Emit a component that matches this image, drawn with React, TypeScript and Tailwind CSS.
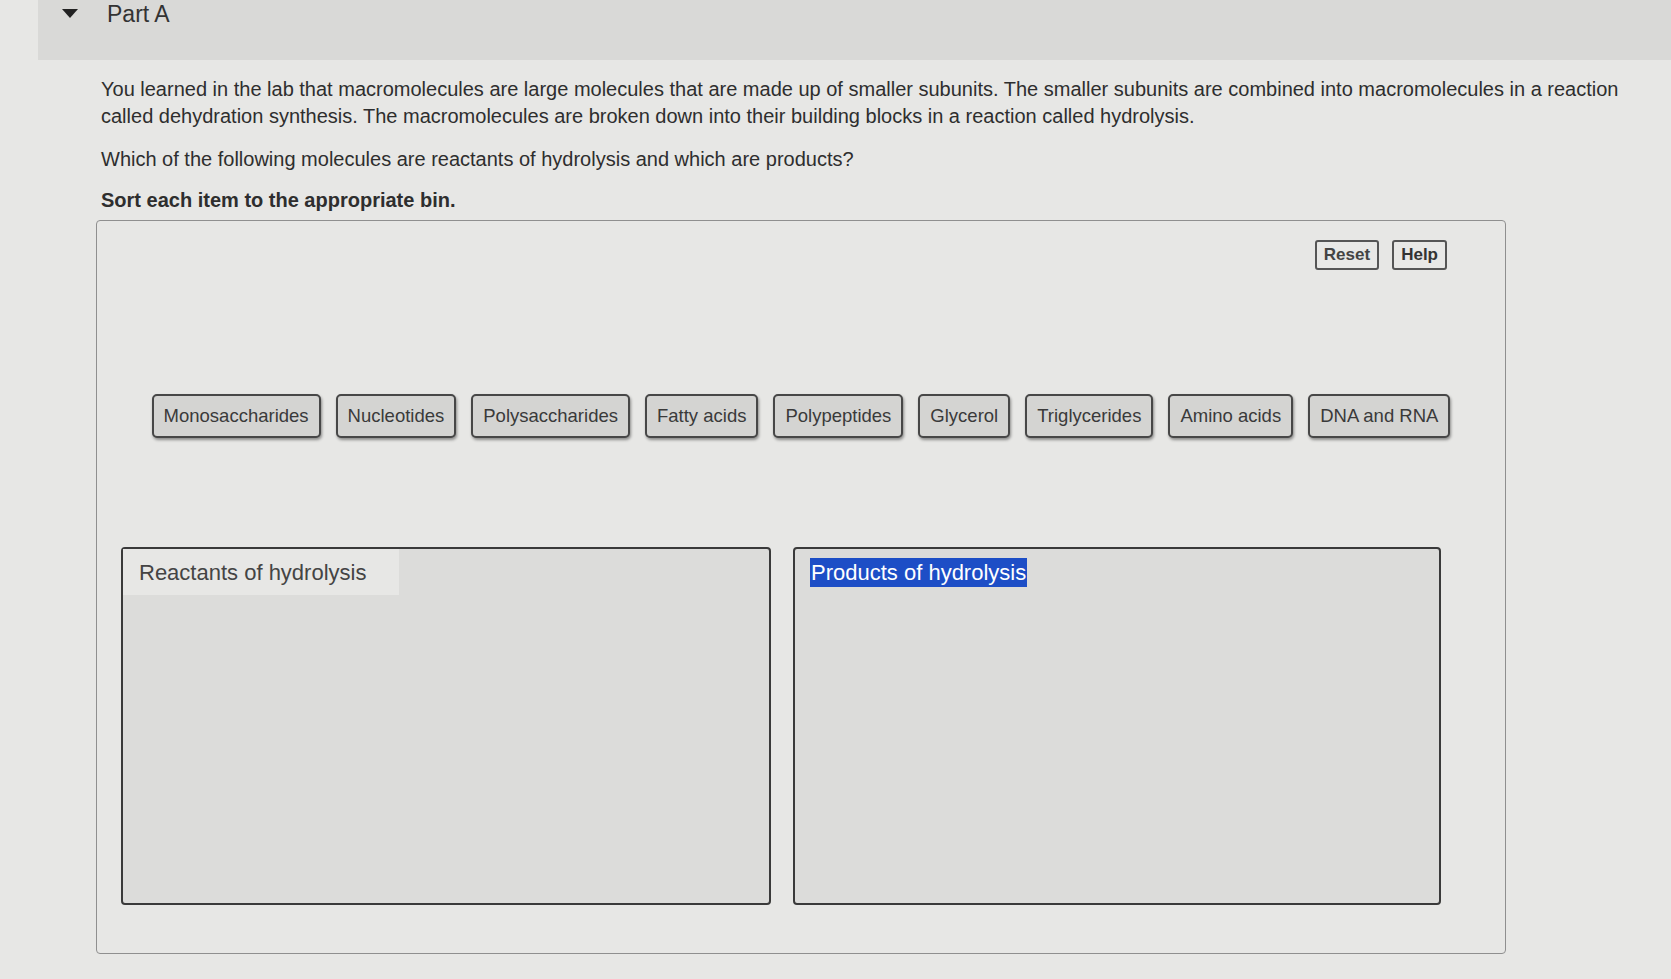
import React from "react";

const items = [
  "Monosaccharides",
  "Nucleotides",
  "Polysaccharides",
  "Fatty acids",
  "Polypeptides",
  "Glycerol",
  "Triglycerides",
  "Amino acids",
  "DNA and RNA",
];

export default function App() {
  return (
    <div
      className="w-[1671px] h-[979px] overflow-hidden bg-[#e7e7e5] text-[#2e2e2e]"
      style={{ fontFamily: '"Liberation Sans", Arial, sans-serif' }}
    >
      {/* header band */}
      <div className="ml-[38px] h-[60px] bg-[#d9d9d7] flex items-start pt-[1px]">
        <div className="w-[25px] h-[26px] ml-[24px] flex items-center">
          <svg width="16" height="10" viewBox="0 0 16 10">
            <polygon points="0,0 16,0 8,9" fill="#222" />
          </svg>
        </div>
        <div className="ml-[20px] text-[23px] leading-[26px] text-[#333]">Part A</div>
      </div>

      <div className="pl-[101px] pt-[16px]">
        <p className="text-[20px] leading-[27px] w-[1530px]">
          You learned in the lab that macromolecules are large molecules that are made up of smaller subunits. The smaller subunits are combined into macromolecules in a reaction called dehydration synthesis. The macromolecules are broken down into their building blocks in a reaction called hydrolysis.
        </p>
        <p className="mt-[16px] text-[20px] leading-[27px]">
          Which of the following molecules are reactants of hydrolysis and which are products?
        </p>
        <p className="mt-[14px] text-[20px] leading-[27px] font-bold">Sort each item to the appropriate bin.</p>
      </div>

      {/* outer box */}
      <div className="ml-[96px] mt-[6px] w-[1410px] h-[734px] border border-[#8f8f8f] rounded-[4px] flex flex-col">
        <div className="flex justify-end gap-[13px] pr-[58px] mt-[19px]">
          <button className="h-[30px] px-[7px] border-2 border-[#555] rounded-[3px] text-[17px] font-bold text-[#444] bg-[#e8e8e6]">
            Reset
          </button>
          <button className="h-[30px] px-[7px] border-2 border-[#555] rounded-[3px] text-[17px] font-bold text-[#333] bg-[#e8e8e6]">
            Help
          </button>
        </div>

        <div className="mt-[124px] flex justify-center gap-[15px]">
          {items.map((t) => (
            <div
              key={t}
              className="h-[44px] px-[10px] flex items-center bg-[#d4d4d2] border-2 border-[#474747] rounded-[5px] shadow-[1px_2px_3px_rgba(0,0,0,0.4)] text-[18.5px] text-[#3a3a3a]"
            >
              {t}
            </div>
          ))}
        </div>

        <div className="mt-[109px] ml-[24px] flex gap-[22px]">
          <div className="w-[650px] h-[358px] border-2 border-[#3a3a3a] rounded-[4px] bg-[#dcdcda]">
            <div className="w-[276px] h-[46px] bg-[#e7e7e5] pl-[16px] pt-[11px] text-[22px] leading-[26px] text-[#444]">
              Reactants of hydrolysis
            </div>
          </div>
          <div className="w-[648px] h-[358px] border-2 border-[#3a3a3a] rounded-[4px] bg-[#dcdcda]">
            <div className="pl-[15px] pt-[10px] text-[22px] leading-[28px]">
              <span className="bg-[#1d4ec6] text-white px-[1px] py-[2px]">Products of hydrolysis</span>
            </div>
          </div>
        </div>
      </div>
    </div>
  );
}
